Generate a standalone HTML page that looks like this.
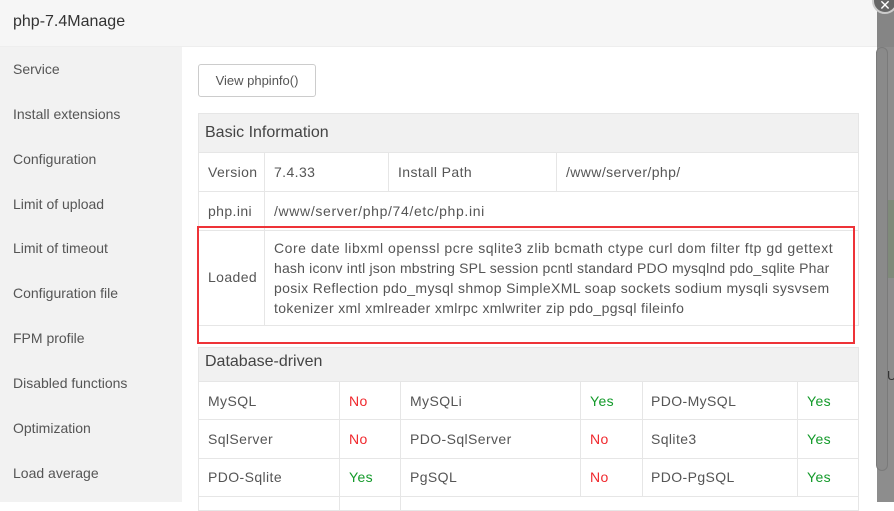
<!DOCTYPE html>
<html><head><meta charset="utf-8"><style>
*{margin:0;padding:0;box-sizing:border-box}
body{width:894px;height:502px;overflow:hidden;background:#fff;font-family:"Liberation Sans",sans-serif;color:#555;position:relative}
.a{position:absolute;white-space:nowrap}
.hdr{left:0;top:0;width:877px;height:47px;background:#f6f6f6;border-bottom:1px solid #eee}
.side{left:0;top:47px;width:182px;height:455px;background:#f2f2f2}
.side div{position:absolute;left:13px;font-size:14px;color:#555}
.t{font-size:14px;color:#555;letter-spacing:0.4px}
.hl{background:#f1f1f1;border:1px solid #e6e6e6}
.ln{position:absolute;background:#e6e6e6}
.r{color:#f0282d}.g{color:#139a2a}
</style></head><body>
<div class="a hdr"></div>
<div class="a" style="left:13px;top:13px;font-size:16px;color:#333">php-7.4Manage</div>
<div class="a side">
<div style="top:14px">Service</div>
<div style="top:59px">Install extensions</div>
<div style="top:104px">Configuration</div>
<div style="top:149px">Limit of upload</div>
<div style="top:193px">Limit of timeout</div>
<div style="top:238px">Configuration file</div>
<div style="top:283px">FPM profile</div>
<div style="top:328px">Disabled functions</div>
<div style="top:373px">Optimization</div>
<div style="top:418px">Load average</div>
</div>
<div class="a" style="left:198px;top:64px;width:118px;height:33px;border:1px solid #ccc;border-radius:3px;font-size:13px;color:#555;line-height:31px;text-align:center">View phpinfo()</div>

<div class="a hl" style="left:198px;top:113px;width:661px;height:40px"></div>
<div class="a" style="left:205px;top:124px;font-size:16px;color:#444">Basic Information</div>
<div class="a" style="left:198px;top:152px;width:661px;height:174px;border:1px solid #e6e6e6;border-top:none"></div>
<div class="ln" style="left:198px;top:191px;width:661px;height:1px"></div>
<div class="ln" style="left:198px;top:230px;width:661px;height:1px"></div>
<div class="ln" style="left:264px;top:152px;width:1px;height:174px"></div>
<div class="ln" style="left:388px;top:152px;width:1px;height:39px"></div>
<div class="ln" style="left:556px;top:152px;width:1px;height:39px"></div>
<div class="a t" style="left:208px;top:164px">Version</div>
<div class="a t" style="left:274px;top:164px">7.4.33</div>
<div class="a t" style="left:398px;top:164px">Install Path</div>
<div class="a t" style="left:566px;top:164px">/www/server/php/</div>
<div class="a t" style="left:208px;top:203px">php.ini</div>
<div class="a t" style="left:274px;top:203px;letter-spacing:0.65px">/www/server/php/74/etc/php.ini</div>
<div class="a t" style="left:208px;top:269px">Loaded</div>
<div class="a t" style="left:274px;top:240px;letter-spacing:0.53px">Core date libxml openssl pcre sqlite3 zlib bcmath ctype curl dom filter ftp gd gettext</div>
<div class="a t" style="left:274px;top:260px;letter-spacing:0.18px">hash iconv intl json mbstring SPL session pcntl standard PDO mysqlnd pdo_sqlite Phar</div>
<div class="a t" style="left:274px;top:280px;letter-spacing:0.36px">posix Reflection pdo_mysql shmop SimpleXML soap sockets sodium mysqli sysvsem</div>
<div class="a t" style="left:274px;top:300px;letter-spacing:0.35px">tokenizer xml xmlreader xmlrpc xmlwriter zip pdo_pgsql fileinfo</div>
<div class="a" style="left:197px;top:226px;width:658px;height:118px;border:2px solid #ee3338"></div>

<div class="a hl" style="left:198px;top:347px;width:661px;height:35px"></div>
<div class="a" style="left:205px;top:353px;font-size:16px;color:#444">Database-driven</div>
<div class="a" style="left:198px;top:381px;width:661px;height:130px;border:1px solid #e6e6e6;border-top:none"></div>
<div class="ln" style="left:198px;top:419px;width:661px;height:1px"></div>
<div class="ln" style="left:198px;top:458px;width:661px;height:1px"></div>
<div class="ln" style="left:198px;top:496px;width:661px;height:1px"></div>
<div class="ln" style="left:339px;top:381px;width:1px;height:130px"></div>
<div class="ln" style="left:400px;top:381px;width:1px;height:130px"></div>
<div class="ln" style="left:580px;top:381px;width:1px;height:115px"></div>
<div class="ln" style="left:642px;top:381px;width:1px;height:115px"></div>
<div class="ln" style="left:797px;top:381px;width:1px;height:115px"></div>

<div class="a t" style="left:208px;top:393px">MySQL</div><div class="a t r" style="left:349px;top:393px">No</div>
<div class="a t" style="left:410px;top:393px">MySQLi</div><div class="a t g" style="left:590px;top:393px">Yes</div>
<div class="a t" style="left:651px;top:393px">PDO-MySQL</div><div class="a t g" style="left:807px;top:393px">Yes</div>
<div class="a t" style="left:208px;top:431px">SqlServer</div><div class="a t r" style="left:349px;top:431px">No</div>
<div class="a t" style="left:410px;top:431px">PDO-SqlServer</div><div class="a t r" style="left:590px;top:431px">No</div>
<div class="a t" style="left:651px;top:431px">Sqlite3</div><div class="a t g" style="left:807px;top:431px">Yes</div>
<div class="a t" style="left:208px;top:469px">PDO-Sqlite</div><div class="a t g" style="left:349px;top:469px">Yes</div>
<div class="a t" style="left:410px;top:469px">PgSQL</div><div class="a t r" style="left:590px;top:469px">No</div>
<div class="a t" style="left:651px;top:469px">PDO-PgSQL</div><div class="a t g" style="left:807px;top:469px">Yes</div>

<div class="a" style="left:877px;top:0;width:17px;height:502px;background:#8d8d8d"></div>
<div class="a" style="left:877px;top:0;width:17px;height:47px;background:#858585"></div>
<div class="a" style="left:877px;top:200px;width:17px;height:78px;background:#7f8a7a"></div>
<div class="a" style="left:876px;top:47px;width:12px;height:424px;background:#8a8a8a;border-radius:6px;border:1px solid #7a7a7a"></div>
<div class="a" style="left:887px;top:368px;font-size:13px;color:#333">U</div>
<div class="a" style="left:872px;top:-12px;width:26px;height:26px;border-radius:50%;background:#666;border:2px solid #ccc;color:#fff;font-size:14px;text-align:center;line-height:30px">✕</div>
</body></html>
